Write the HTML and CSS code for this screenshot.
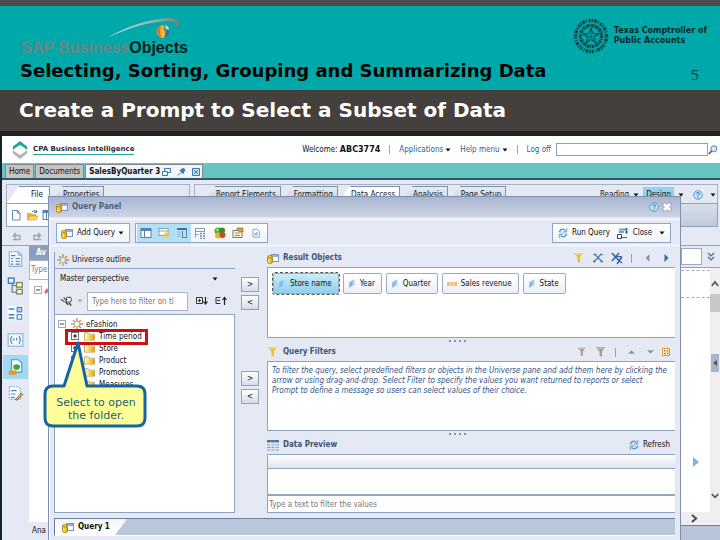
FILE: index.html
```html
<!DOCTYPE html>
<html lang="en">
<head>
<meta charset="utf-8">
<title>Create a Prompt to Select a Subset of Data</title>
<link rel="stylesheet" href="styles.css">
</head>
<body>
<svg class="defs" aria-hidden="true">
  <defs>
    <linearGradient id="gold" x1="0" x2="1"><stop offset="0" stop-color="#fff07a"/><stop offset="1" stop-color="#e0a010"/></linearGradient>
    <linearGradient id="arc" x1="0" x2="1"><stop offset="0" stop-color="#b9dcdc"/><stop offset=".6" stop-color="#9fb5b5"/><stop offset="1" stop-color="#6a7f80"/></linearGradient>
    <symbol id="query" viewBox="0 0 12 12"><rect x="4.5" y="2.5" width="7" height="7" fill="#f4f9ff" stroke="#7593bd"/><path d="M5 3h6v2H5z" fill="#8fb2de"/><rect x=".5" y="3.5" width="5" height="8" rx="2" fill="url(#gold)" stroke="#b8860b"/><path d="M1 5.5q2 1.200 4 0" stroke="#b8860b" fill="none"/></symbol>
    <symbol id="universe" viewBox="0 0 12 12"><g stroke-width="1.500" fill="none"><path d="M6 0v4M10 2L7.500 4.500" stroke="#c99a2e"/><path d="M12 6H8M10 10L7.500 7.500" stroke="#8c8ca8"/><path d="M6 12V8M2 10l2.500-2.500" stroke="#d6a850"/><path d="M0 6h4M2 2l2.500 2.500" stroke="#9a9ab0"/></g></symbol>
    <symbol id="folder" viewBox="0 0 12 10"><path d="M.5 9.500v-8h4l1 1.500h6v6.500z" fill="#fff3b0" stroke="#b9a36a"/><path d="M3 4h8.500v5.500H3z" fill="url(#gold)"/></symbol>
    <symbol id="plus" viewBox="0 0 8 8"><rect x=".5" y=".5" width="7" height="7" fill="#fff" stroke="#6d7480"/><path d="M2 4h4M4 2v4" stroke="#111"/></symbol>
    <symbol id="minus" viewBox="0 0 8 8"><rect x=".5" y=".5" width="7" height="7" fill="#fff" stroke="#a5abb5"/><path d="M2 4h4" stroke="#444"/></symbol>
    <symbol id="caret" viewBox="0 0 6 4"><path d="M.5 .5h5L3 3.500z" fill="currentColor"/></symbol>
    <symbol id="help" viewBox="0 0 10 10"><circle cx="5" cy="5" r="4.300" fill="#c9e5fa" stroke="#5a9bd0"/><path d="M3.500 3.800Q3.700 2.300 5.200 2.400q1.700.3 1.200 1.700L5 5.600v.9M5 7.200v1" fill="none" stroke="#2d76b8"/></symbol>
    <symbol id="refresh" viewBox="0 0 12 12"><path d="M1.500 5Q3 1 7 1.500l2 1.500M10.500 7Q9 11 5 10.500l-2-1.500" fill="none" stroke="#4a94cc" stroke-width="1.500"/><path d="M10.500 0v4.500H6M1.500 12V7.500H6" fill="none" stroke="#4a94cc"/><path d="M2.500 6h7" stroke="#8ec2e6"/></symbol>
    <symbol id="funnel" viewBox="0 0 12 12"><path d="M1 1h9L7 5.500V11L4.500 9.500v-4z" fill="currentColor"/><path d="M2.500 2h6" stroke="#fff" opacity=".6"/></symbol>
    <symbol id="dim" viewBox="0 0 10 12"><path d="M1.500 4L6 1v7L1.500 11z" fill="#86b7e4"/><path d="M6 1l2-.5v7L6 8z" fill="#a9cdee"/></symbol>
    <symbol id="measure" viewBox="0 0 11 6"><path d="M0 1h3v4H0zM4 1h3v4H4zM8 1h3v4H8z" fill="#f0a34a"/><path d="M0 3h11" stroke="#fbd9ae"/></symbol>
    <symbol id="page" viewBox="0 0 12 12"><path d="M2.500 1.500h5l2.500 2.500v7H2.500z" fill="#fff" stroke="#5b8dbb"/><path d="M7.500 1.500V4H10" fill="none" stroke="#5b8dbb"/></symbol>
    <symbol id="pagebars" viewBox="0 0 12 12"><path d="M2.500 1.500h5l2.500 2.500v7H2.500z" fill="#fff" stroke="#5b9bd0"/><path d="M5 9V6M7 9V4.500" stroke="#3a78b0"/></symbol>
    <symbol id="open" viewBox="0 0 12 12"><path d="M1 11V4h4l1 1h4v6z" fill="#e8b43a"/><path d="M1 11l3-4h8l-2 4z" fill="#ffd968" stroke="#b88a20" stroke-width=".6"/><path d="M6 3q2-3 4 0M10.500 1v2.500H8" fill="none" stroke="#3f79b0"/></symbol>
    <symbol id="grid" viewBox="0 0 12 12"><rect x="1" y="1.500" width="10" height="9" fill="#fff" stroke="#4f84b5"/><path d="M1 3h10" stroke="#4f84b5" stroke-width="2"/><path d="M4.500 3v8" stroke="#4f84b5"/></symbol>
    <symbol id="gridstar" viewBox="0 0 12 12"><rect x="1" y="1.500" width="9" height="7" fill="#fff" stroke="#8aa3bd"/><path d="M1 4h9" stroke="#8aa3bd"/><path d="M8 4l1 2.500L12 7 9.500 8.500 9 12 7.500 9 5 8l2-1.500z" fill="#f3c52e"/></symbol>
    <symbol id="columns" viewBox="0 0 12 12"><path d="M1 2h10" stroke="#3f6f9f" stroke-width="2"/><path d="M1.500 5h3M1.500 7h3M1.500 9h3" stroke="#8db4d6"/><path d="M6.500 4v7M10.500 2v9M6.500 10.500h4" stroke="#4f84b5" fill="none"/></symbol>
    <symbol id="rows" viewBox="0 0 12 12"><path d="M1.500 10.500v-9h9v3h-9M1.500 7.500h3" fill="none" stroke="#7c9cbb"/><path d="M6 6.500h2M9 6.500h2M6 9h2M9 9h2M6 11.500h2M9 11.500h2" stroke="#6b8fb5" stroke-width="1.500"/></symbol>
    <symbol id="table" viewBox="0 0 12 12"><path d="M0 1h12v2.500H0z" fill="#4d79a8"/><path d="M0 6h12M0 8.500h12M0 11h12" stroke="#7fa5ca"/><path d="M4 3v9M8 3v9" stroke="#e4eaf4"/></symbol>
    <symbol id="people" viewBox="0 0 12 12"><circle cx="4" cy="4" r="3.500" fill="#4fae3a"/><circle cx="8" cy="3.500" r="3" fill="#2f8f2c"/><circle cx="4" cy="8.500" r="3" fill="#e9b92c"/><circle cx="8.500" cy="8" r="3" fill="#c94b25"/><circle cx="3.500" cy="3" r="1.200" fill="#b9e6a5"/></symbol>
    <symbol id="props" viewBox="0 0 12 12"><rect x="1" y="3.500" width="9" height="7" fill="#fff6dc" stroke="#8c7b55"/><path d="M5 1h6v4H8L5 3z" fill="#dba044" stroke="#805a1c" stroke-width=".6"/><path d="M3 6h5M3 8.500h5" stroke="#7b8fb0"/></symbol>
    <symbol id="report" viewBox="0 0 14 16"><path d="M1.500 1.500h8l3 3v10h-11z" fill="#f4faff" stroke="#86b2d8"/><path d="M9.500 1.500v3h3" fill="none" stroke="#86b2d8"/><path d="M3 5h4M3 7.500h2M7 7.500h4M3 10h2M7 10h4M3 12.500h2M7 12.500h4" stroke="#4682b4"/></symbol>
    <symbol id="tree" viewBox="0 0 14 16"><path d="M4 5v8.500h5M4 7.500h5" fill="none" stroke="#56779a"/><rect x=".7" y="1" width="5" height="4.500" fill="#fff" stroke="#3e7db6" stroke-width="1.300"/><rect x="8" y="5" width="5" height="4" fill="#fff" stroke="#888c5b" stroke-width="1.300"/><rect x="8" y="11" width="5" height="4" fill="#fff" stroke="#888c5b" stroke-width="1.300"/></symbol>
    <symbol id="controls" viewBox="0 0 14 16"><path d="M0 1.500h14v13H0z" fill="#f4faff"/><path d="M1 4.500h5M1 9.500h5M1 12.500h5" stroke="#4682b4" stroke-width="1.300"/><rect x="8.500" y="3" width="4" height="4" fill="#acd0ec" stroke="#4682b4"/><rect x="8.500" y="9.500" width="4" height="4" fill="#fff" stroke="#4682b4"/></symbol>
    <symbol id="edit" viewBox="0 0 14 16"><path d="M1.500 1.500h8l2 2v9h-10z" fill="#fff" stroke="#86b2d8" stroke-dasharray="2 1"/><path d="M3 5h5M3 8h4M3 11h3" stroke="#4682b4"/><path d="M7 13l5-6 1.500 1.500-5 5z" fill="#e6b54b" stroke="#463c2a" stroke-width=".6"/></symbol>
    <symbol id="cross" viewBox="0 0 10 10"><path d="M.5 1.500h2Q5 6 9.500 8.500h-2M9.500 1.500h-2Q5 6 .5 8.500h2" fill="none" stroke="#3c74ae" stroke-width="1.300"/></symbol>
  </defs>
</svg>

<header class="slide-head">
  <div class="brand-row">
    <div class="sap">
      <svg class="sap-arc" viewBox="0 0 76 22" aria-hidden="true">
        <path d="M0 20Q30 2 62 0q12 0 10 9l-3-1q1-4-8-5Q34 4 0 20z" fill="url(#arc)"/>
        <circle cx="56" cy="13.500" r="6.500" fill="#f0b429"/><path d="M56 7a6.500 6.500 0 0 1 0 13z" fill="#2b6fae"/><path d="M55 7.200q-4 6 0 12.600l-3-1q-4-6 0-11z" fill="#e0702e"/><path d="M54 8q3 5 0 11l3 1q3-6 0-12z" fill="#f6c324"/><path d="M57 8q4 3 1 7l-2 4q3-5 0-8z" fill="#5cab4a"/><path d="M58 7q4 1 4 5l-3-1z" fill="#b9dff2"/>
      </svg>
      <span class="sap-gray">SAP Business</span><span class="sap-dark">Objects</span>
    </div>
    <div class="agency">
      <svg class="seal" viewBox="0 0 36 36" fill="none" stroke="#0d4447" aria-hidden="true">
        <circle cx="18" cy="18" r="15.500" stroke-width="3.500" stroke-dasharray="1.500 1 3 1.200 1 1.500 2 1"/>
        <circle cx="18" cy="18" r="10.500" stroke-width="3.500" stroke-dasharray="2 .7 1 .8"/>
        <path d="M18 10l2 5.600 6 .1-4.700 3.600 1.700 5.700-5-3.400-5 3.400 1.700-5.700L10 15.700l6-.1z" fill="#00a9a9" stroke-width="1"/>
        <path d="M18 10v9l5 6M18 19l8-3.300M18 19l-8-3.300M18 19l-5 6" stroke-width=".7"/>
      </svg>
      <p>Texas Comptroller of<br>Public Accounts</p>
    </div>
  </div>
  <div class="course-row"><p>Selecting, Sorting, Grouping and Summarizing Data</p><span class="num">5</span></div>
</header>
<h1>Create a Prompt to Select a Subset of Data</h1>

<main class="app">
  <div class="app-head">
    <svg class="cpa-logo" viewBox="0 0 18 20" aria-hidden="true"><path d="M1 10V6l8-6 8 6v4l-4-3-4-2.500L5 7z" fill="#23a5a3"/><path d="M1 10l4 3 4 2.500 4-2.500 4-3v4l-8 6-8-6z" fill="#b3b7bb"/></svg>
    <strong class="cpa">CPA Business Intelligence</strong>
    <div class="user-menu">
      <span>Welcome: <b>ABC3774</b></span><i class="bar"></i>
      <a href="#">Applications <svg class="caret"><use href="#caret"/></svg></a>
      <a href="#">Help menu <svg class="caret"><use href="#caret"/></svg></a><i class="bar"></i>
      <a href="#">Log off</a>
    </div>
    <input class="search" type="search" aria-label="Search">
    <svg class="lens" viewBox="0 0 12 12" aria-hidden="true"><circle cx="7" cy="4.500" r="3.500" fill="#d9ecfb" stroke="#5b9bd0" stroke-width="1.300"/><path d="M4.500 7L1 11" stroke="#a4563a" stroke-width="2"/></svg>
  </div>

  <nav class="doc-tabs">
    <a href="#">Home</a><a href="#">Documents</a>
    <a href="#" class="on">SalesByQuarter 3
      <svg viewBox="0 0 40 10" class="tab-tools" aria-hidden="true"><g fill="none" stroke="#3a78b0"><path d="M3.500 4V1.500h6v4H7"/><path d="M1.500 4.500h5v4h-5z"/><path d="M17 8.500l3-3m-1-2l3 3 2-4-2-1z" fill="#3a78b0"/><path d="M31.500 1.500h7v7h-7zM33 3l4 4M37 3l-4 4" fill="#cfe3f4"/></g></svg></a>
  </nav>

  <div class="ribbon">
    <div class="tab-set first">
      <button class="slant on">File</button><button class="slant">Properties</button>
    </div>
    <div class="tab-set second">
      <button class="slant">Report Elements</button><button class="slant">Formatting</button><button class="slant on">Data Access</button><button class="slant">Analysis</button><button class="slant">Page Setup</button>
      <div class="modes"><span>Reading</span><svg class="caret"><use href="#caret"/></svg><span class="design">Design</span><svg class="caret"><use href="#caret"/></svg><svg class="ic10 help"><use href="#help"/></svg><svg class="caret"><use href="#caret"/></svg></div>
    </div>
  </div>
  <div class="tool-row"><div class="file-tools"><svg class="ic12"><use href="#page"/></svg><svg class="ic12"><use href="#open"/></svg><svg class="ic12"><use href="#grid"/></svg></div><div class="tool-right"></div></div>
  <div class="undo-row">
    <svg viewBox="0 0 30 10" class="undo" aria-hidden="true"><path d="M1 7.500h7v-4H2M4 1L1.500 3.500 4 6M29 7.500h-7v-4h6M26 1l2.500 2.500L26 6" fill="none" stroke="#9aa3b0" stroke-width="1.300"/></svg>
  </div>

  <div class="workspace">
    <nav class="side" aria-label="Panels">
      <svg><use href="#report"/></svg><svg><use href="#tree"/></svg><svg><use href="#controls"/></svg>
      <svg viewBox="0 0 14 16"><rect x=".5" y="2.500" width="13" height="11" fill="#f4faff" stroke="#86b2d8"/><path d="M4 4.500Q1.500 8 4 11.500M10 4.500q2.500 3.500 0 7M5.500 6.500v2M8 6v2.500" fill="none" stroke="#4682b4"/></svg>
      <svg class="picked" viewBox="0 0 14 16"><path d="M3.500 1.500h6l3 3v8h-9z" fill="#fff" stroke="#4c94c6"/><path d="M1 11h7v4H1z" fill="#d89d3a"/><ellipse cx="8" cy="8" rx="3" ry="2.500" fill="#3aa64a"/></svg>
      <svg><use href="#edit"/></svg>
    </nav>
    <aside class="avail"><h2>Av</h2><div class="avail-type">Type</div><div class="avail-tree"><svg class="box"><use href="#minus"/></svg><svg class="ic8" viewBox="0 0 8 8"><path d="M0 6l3-4 2 3-3 3z" fill="#e06a72"/></svg></div><div class="avail-foot">Ana</div></aside>
    <section class="canvas">
      <div class="formula"><span class="fx"></span><svg viewBox="0 0 8 10" class="chev"><path d="M1 1l3 3 3-3M1 5l3 3 3-3" fill="none" stroke="#3b6e9c" stroke-width="1.200"/></svg></div>
      <div class="sheet">
        <div class="sheet-page"><i></i><svg viewBox="0 0 6 10" class="next"><path d="M0 0l6 5-6 5z" fill="#7db7e4"/></svg></div>
        <div class="scroll"><svg viewBox="0 0 10 8"><path d="M1 7l4-5 4 5" fill="none" stroke="#555" stroke-width="2"/></svg><i class="thumb"></i><i class="grab"><svg viewBox="0 0 4 6"><path d="M4 0v6L0 3z" fill="#555"/></svg></i><svg viewBox="0 0 10 8" class="down"><path d="M1 1l4 4 4-4" fill="none" stroke="#555" stroke-width="2"/></svg></div>
      </div>
      <div class="hscroll"><svg viewBox="0 0 8 10"><path d="M1 1l5 4-5 4" fill="none" stroke="#444" stroke-width="2"/></svg></div>
      <div class="status"></div>
    </section>
  </div>

  <section class="dialog" aria-label="Query Panel">
    <header class="dlg-title"><svg class="ic12"><use href="#query"/></svg><b>Query Panel</b><svg class="ic10 push"><use href="#help"/></svg><svg class="ic8" viewBox="0 0 8 8"><path d="M0 0h2.500L4 1.500 5.500 0H8v2.500L6.500 4 8 5.500V8H5.500L4 6.500 2.500 8H0V5.500L1.500 4 0 2.500z" fill="#fff" stroke="#63718c" stroke-width=".5"/></svg></header>
    <div class="dlg-tools">
      <div class="group add"><button><svg class="ic12"><use href="#query"/></svg>Add Query</button><svg class="caret"><use href="#caret"/></svg></div>
      <div class="group icons"><span class="hot"><svg class="ic12"><use href="#grid"/></svg></span><span class="hot"><svg class="ic12"><use href="#gridstar"/></svg></span><span class="hot"><svg class="ic12"><use href="#columns"/></svg></span><span><svg class="ic12"><use href="#rows"/></svg></span><span class="apart"><svg class="ic12"><use href="#people"/></svg></span><span><svg class="ic12"><use href="#props"/></svg></span><span><svg class="ic10"><use href="#pagebars"/></svg></span></div>
      <div class="group run"><button><svg class="ic10"><use href="#refresh"/></svg>Run Query</button><button><svg class="ic12" viewBox="0 0 12 12"><path d="M2 2.500h7M2 5h5M8 5h3" stroke="#6e9fc6" stroke-width="2"/><path d="M.5 7.500h4v4h-4z" fill="#fff" stroke="#345"/><path d="M9.500 7V1M8 2.500L9.500 1 11 2.500M5 10.500h5" fill="none" stroke="#2d6ea6"/></svg>Close</button><svg class="caret"><use href="#caret"/></svg></div>
    </div>
    <div class="dlg-main">
      <div class="outline">
        <div class="out-head"><svg class="ic12"><use href="#universe"/></svg>Universe outline</div>
        <div class="persp">Master perspective<svg class="caret"><use href="#caret"/></svg></div>
        <div class="filter">
          <svg class="bino" viewBox="0 0 14 12" aria-hidden="true"><path d="M1 4l4 3M4 2l3 4" stroke="#555" stroke-width="1.300"/><rect x="7" y="2" width="5" height="5" rx="1" fill="#fff" stroke="#333"/><path d="M6 7l3 3M10 8l2 3" stroke="#333" stroke-width="1.500"/></svg>
          <svg class="caret pale"><use href="#caret"/></svg>
          <input type="text" placeholder="Type here to filter on tl" aria-label="Filter the outline">
          <svg class="exp" viewBox="0 0 12 10"><path d="M.5 1.500h6v6h-6zM2 4.500h3M3.500 3v3" fill="none" stroke="#333"/><path d="M9.500 1v7M7.500 5.500l2 2.500 2-2.500" fill="none" stroke="#222" stroke-width="1.200"/></svg>
          <svg class="exp" viewBox="0 0 12 10"><path d="M5.500 1.500H1v6h4.500M2 4.500h3" fill="none" stroke="#333"/><path d="M9.500 9V2M7.500 4l2-2.500 2 2.500" fill="none" stroke="#222" stroke-width="1.200"/></svg>
        </div>
        <ul class="nodes">
          <li><svg class="box"><use href="#minus"/></svg><svg class="ic12"><use href="#universe"/></svg>eFashion
            <ul>
              <li class="target"><svg class="box"><use href="#plus"/></svg><svg class="fold"><use href="#folder"/></svg>Time period</li>
              <li><svg class="box"><use href="#plus"/></svg><svg class="fold"><use href="#folder"/></svg>Store</li>
              <li><svg class="box"><use href="#plus"/></svg><svg class="fold"><use href="#folder"/></svg>Product</li>
              <li><svg class="box"><use href="#plus"/></svg><svg class="fold"><use href="#folder"/></svg>Promotions</li>
              <li><svg class="box"><use href="#plus"/></svg><svg class="fold"><use href="#folder"/></svg>Measures</li>
            </ul></li>
        </ul>
      </div>
      <div class="movers">
        <div><button>&gt;</button><button>&lt;</button></div>
        <div><button>&gt;</button><button>&lt;</button></div>
      </div>
      <div class="panes">
        <div class="pane-head"><svg class="ic12"><use href="#query"/></svg><b>Result Objects</b>
          <span class="pane-icons"><svg class="ic12 yellow"><use href="#funnel"/></svg><svg class="ic10"><use href="#cross"/></svg><svg class="ic12" viewBox="0 0 12 12"><path d="M1 1q4 5 8 8M8 1L1 9M6 7l5 4M11 5l-5 7M5 4l6 1" fill="none" stroke="#2f659e" stroke-width="1.500"/></svg><i class="bar"></i><svg class="tri" viewBox="0 0 6 8"><path d="M5 0v8L1 4z" fill="#8f97a3"/></svg><svg class="tri" viewBox="0 0 6 8"><path d="M1 0v8l4-4z" fill="#2a6bb0"/></svg></span></div>
        <div class="pane results"><button class="obj sel"><svg class="dim"><use href="#dim"/></svg>Store name</button><button class="obj"><svg class="dim"><use href="#dim"/></svg>Year</button><button class="obj"><svg class="dim"><use href="#dim"/></svg>Quarter</button><button class="obj"><svg class="mea"><use href="#measure"/></svg>Sales revenue</button><button class="obj"><svg class="dim"><use href="#dim"/></svg>State</button></div>
        <div class="dots"><i></i><i></i><i></i><i></i></div>
        <div class="pane-head"><svg class="ic12 yellow"><use href="#funnel"/></svg><b>Query Filters</b>
          <span class="pane-icons"><svg class="ic10 tan"><use href="#funnel"/></svg><svg class="ic12 tan"><use href="#funnel"/></svg><i class="bar"></i><svg class="tri" viewBox="0 0 8 6"><path d="M0 5h8L4 1z" fill="#8f97a3"/></svg><svg class="tri" viewBox="0 0 8 6"><path d="M0 1h8L4 5z" fill="#8f97a3"/></svg><svg class="ic8" viewBox="0 0 8 8"><path d="M.5.5h7v7h-7z" fill="#fff6d8" stroke="#d69a2c"/><path d="M2 2h1.500v1.500H2zM4.800 2h1.500v1.500H4.800zM2 4.800h1.500v1.500H2zM4.800 4.800h1.500v1.500H4.800z" fill="#a8701a"/></svg></span></div>
        <div class="pane hint"><p>To filter the query, select predefined filters or objects in the Universe pane and add them here by clicking the<br>arrow or using drag-and-drop. Select Filter to specify the values you want returned to reports or select<br>Prompt to define a message so users can select values of their choice.</p></div>
        <div class="dots"><i></i><i></i><i></i><i></i></div>
        <div class="pane-head"><svg class="ic12"><use href="#table"/></svg><b>Data Preview</b><button class="refresh"><svg class="ic10"><use href="#refresh"/></svg>Refresh</button></div>
        <div class="preview"><div class="pv-head"></div><div class="pv-body"></div><input type="text" placeholder="Type a text to filter the values" aria-label="Filter the values"></div>
      </div>
    </div>
    <footer class="dlg-tabs"><button><svg class="ic12"><use href="#query"/></svg>Query 1</button></footer>
    <div class="callout">
      <svg viewBox="0 0 106 90" aria-hidden="true"><path d="M10 46h11L35 3l9 43h50q8 0 8 8v24q0 8-8 8H10q-8 0-8-8V54q0-8 8-8z" fill="#ffff99" stroke="#1565a5" stroke-width="3" stroke-linejoin="round"/></svg>
      <p>Select to open<br>the folder.</p>
    </div>
  </section>
</main>
</body>
</html>
```
FILE: styles.css
```css
* { box-sizing: border-box; }
html, body { height: 100%; }
body {
  margin: 0;
  display: flex;
  flex-direction: column;
  overflow: hidden;
  background: #fff;
  color: #111;
  font: 8px/12px "DejaVu Sans Condensed", "DejaVu Sans", sans-serif;
}
p, h1, h2, ul { margin: 0; padding: 0; }
li { list-style: none; }
svg { display: block; flex: none; overflow: visible; }
button, input { font: inherit; color: inherit; margin: 0; padding: 0; border: 0; background: none; border-radius: 0; }
a { color: #2a6494; text-decoration: none; }
button { display: flex; align-items: center; white-space: nowrap; }
.defs { position: absolute; width: 0; height: 0; }
.ic8 { width: 8px; height: 8px; }
.ic10 { width: 10px; height: 10px; }
.ic12 { width: 12px; height: 12px; }
.caret { width: 6px; height: 4px; color: #111; }
.box { width: 8px; height: 8px; }
.bar { width: 1px; height: 9px; background: #93a3ba; }
.yellow { color: #efc321; }
.tan { color: #a89a86; }

/* Slide heading */
.slide-head { background: #00a9a9; border-top: 6px solid #4d4d4d; height: 90px; flex: none; }
.brand-row { display: flex; justify-content: space-between; height: 52px; padding: 12px 13px 0 21px; }
.sap { display: block; font: bold 16px/18px "Liberation Sans", sans-serif; white-space: nowrap; }
.sap-arc { width: 76px; height: 22px; margin: 0 0 -1px 86px; }
.sap-gray { color: #6b8587; }
.sap-dark { color: #0b1d20; }
.agency { display: flex; gap: 5px; }
.agency p { font: bold 8px/10px "DejaVu Sans", sans-serif; padding-top: 8px; color: #06292b; }
.seal { width: 36px; height: 36px; }
.course-row { display: flex; justify-content: space-between; padding: 3px 21px 0 20px; font: bold 18px/20px "DejaVu Sans", sans-serif; color: #000; }
.num { font: 15px/26px "Noto Sans", sans-serif; color: #114d50; }
h1 { flex: none; height: 46px; padding: 9px 19px; background: #43403d; border-bottom: 5px solid #222; color: #fff; font: bold 20px/22px "DejaVu Sans", sans-serif; }

/* Application frame */
.app { position: relative; flex: 1; min-height: 0; display: flex; flex-direction: column; border-left: 2px solid #16222e; background: #e4e9f3; }
.app-head { display: flex; align-items: center; height: 27px; background: #fff; padding: 0 2px 0 10px; flex: none; }
.cpa-logo { width: 16px; height: 18px; }
.cpa { margin-left: 5px; font: bold 7px/10px "DejaVu Sans", sans-serif; color: #26323c; border-bottom: 1px solid #23a5a3; }
.user-menu { display: flex; align-items: center; gap: 9px; margin-left: auto; }
.user-menu b { font-family: "DejaVu Sans", sans-serif; }
.user-menu a { display: flex; align-items: center; gap: 2px; }
.search { width: 152px; height: 13px; border: 1px solid #8f9db3; margin-left: 5px; }
.lens { width: 10px; height: 10px; }
.doc-tabs { display: flex; flex: none; height: 17px; background: #66c5c0; border-bottom: 2px solid #31596d; padding: 1px 3px 0; gap: 1px; }
.doc-tabs a { display: flex; align-items: center; padding: 0 3px; background: #c6c3c0; color: #111; border: 1px solid #7f8a90; border-bottom: 0; }
.doc-tabs .on { background: #f2f4f8; font-weight: bold; gap: 1px; padding-right: 1px; }
.tab-tools { width: 40px; height: 10px; }
.ribbon { display: flex; gap: 4px; padding: 4px 2px 0 4px; height: 23px; flex: none; }
.tab-set { display: flex; align-items: flex-end; border: 1px solid #a5b1c6; border-bottom: 0; }
.first { width: 184px; }
.second { flex: 1; padding-left: 8px; }
.slant { position: relative; height: 17px; z-index: 0; border-right: 1px solid #7d90ac; padding: 0 4px 0 13px; }
.slant::before { content: ""; position: absolute; inset: 0; z-index: -1; background: linear-gradient(#e9edf5, #c5cfdf); clip-path: polygon(0 100%, 12px 0, 100% 0, 100% 100%); }
.slant::after { content: ""; position: absolute; left: 12px; right: 0; top: 0; border-top: 1px solid #7d90ac; }
.slant.on::before { background: #fff; }
.first .slant.on { padding: 0 6px 0 24px; }
.modes { display: flex; align-items: center; gap: 4px; margin-left: auto; height: 17px; padding-right: 1px; }
.design { background: #93d2ee; padding: 2px 3px; }
.help { margin: 0 3px 0 5px; }
.tool-row { display: flex; height: 24px; padding: 0 2px 0 4px; gap: 4px; flex: none; }
.file-tools { width: 184px; background: #fff; border: 1px solid #8fa2bf; display: flex; align-items: center; gap: 4px; padding-left: 3px; }
.tool-right { flex: 1; background: linear-gradient(#d8dfeb, #c0cada); border: 1px solid #8fa2bf; }
.undo-row { height: 18px; flex: none; padding: 5px 10px; }
.undo { width: 30px; height: 10px; }
.workspace { display: flex; flex: 1; min-height: 0; border-top: 1px solid #8fa2bf; }
.side { width: 27px; display: flex; flex-direction: column; align-items: center; gap: 3px; padding-top: 1px; }
.side svg { width: 25px; height: 24px; padding: 3px 0; }
.side .picked { background: #9fd9f3; }
.avail { width: 19px; background: #fff; display: flex; flex-direction: column; white-space: nowrap; margin-right: auto; }
.avail h2 { background: #8d9dba; color: #fff; font: bold 8px/14px "DejaVu Sans Condensed", sans-serif; padding-left: 7px; }
.avail-type { border: 1px solid #a9b4c8; border-width: 1px 0 1px 1px; padding: 2px 1px; color: #7a7a7a; line-height: 14px; }
.avail-tree { display: flex; gap: 2px; padding: 6px 0 6px 5px; }
.avail-foot { margin-top: auto; background: #e4e9f3; padding: 2px 3px; line-height: 14px; }
.canvas { width: 39px; display: flex; flex-direction: column; }
.formula { height: 22px; display: flex; align-items: center; justify-content: space-between; padding-right: 5px; border-bottom: 1px solid #8fa2bf; }
.fx { width: 21px; height: 17px; background: #fff; border: 1px solid #9dacc4; }
.chev { width: 8px; height: 10px; }
.sheet { flex: 1; display: flex; background: #fff; }
.sheet-page { flex: 1; display: flex; flex-direction: column; justify-content: space-between; padding: 2px 0 45px; }
.sheet-page i { height: 28px; border: 1px dashed #aaa; border-width: 1px 0; }
.next { width: 6px; height: 10px; margin-left: 12px; }
.scroll { width: 10px; background: #efefef; display: flex; flex-direction: column; align-items: center; padding: 12px 0; }
.scroll svg { width: 8px; height: 7px; }
.thumb { width: 10px; height: 18px; background: #c8c8c8; margin-top: 7px; }
.grab { width: 8px; height: 18px; background: #a7b5cd; margin-top: 42px; display: flex; align-items: center; justify-content: center; }
.scroll .grab svg { width: 4px; height: 6px; }
.scroll .down { margin-top: auto; }
.hscroll { height: 13px; background: #efefef; padding: 2px 0 0 10px; }
.hscroll svg { width: 7px; height: 9px; }
.status { height: 15px; background: #b9c5da; border-top: 1px solid #6d7f9e; }

/* Query Panel dialog, lying over the application */
.dialog { position: absolute; top: 60px; left: 46px; right: 39px; bottom: 0; display: flex; flex-direction: column; background: #e4e9f3; border: 1px solid #7f90ac; border-bottom: 0; box-shadow: inset 1px 1px #fff; }
.dlg-title { display: flex; align-items: center; gap: 4px; height: 20px; padding: 0 9px 0 7px; background: linear-gradient(#a9b5d0, #ccd4e5); color: #4a607f; }
.push { margin-left: auto; }
.dlg-tools { display: flex; align-items: center; gap: 5px; height: 27px; padding: 0 9px 0 7px; border-top: 1px solid #fff; border-bottom: 1px solid #fff; margin: 2px 0 3px; flex: none; }
.group { display: flex; align-items: center; height: 20px; border: 1px solid #8fa5c5; background: linear-gradient(#fff, #f0f3f9); }
.group button { gap: 4px; }
.add { width: 74px; padding: 0 5px 0 4px; justify-content: space-between; }
.icons { padding: 0 2px 0 1px; }
.icons span { width: 18px; height: 18px; display: flex; align-items: center; justify-content: center; }
.icons .hot { background: #b5dff2; }
.icons .apart { margin-left: 2px; }
.run { margin-left: auto; width: 119px; padding: 0 5px; justify-content: space-between; }
.dlg-main { display: flex; flex: 1; min-height: 0; padding: 0 5px; }
.outline { width: 181px; display: flex; flex-direction: column; border-left: 1px solid #8fa2bf; margin-top: 3px; }
.out-head { display: flex; align-items: center; gap: 3px; height: 17px; padding-left: 2px; border-bottom: 1px solid #8fa2bf; }
.persp { display: flex; align-items: center; justify-content: space-between; height: 19px; padding: 0 17px 0 5px; }
.filter { display: flex; align-items: center; gap: 4px; height: 26px; padding: 0 5px; }
.bino { width: 13px; height: 12px; }
.pale { color: #a5abb5; }
.filter input { flex: 1; min-width: 0; height: 19px; background: #fff; border: 1px solid #a9b4c8; padding: 0 4px; margin-right: 4px; }
.exp { width: 12px; height: 10px; margin-right: 3px; }
input::placeholder { color: #777; opacity: 1; }
.nodes { flex: 1; background: #fff; border: 1px solid #8fa2bf; border-left: 0; padding: 3px 3px; }
.nodes li { line-height: 12px; }
.nodes li > svg { display: inline-block; vertical-align: middle; margin-right: 5px; }
.nodes li > .ic12 { margin: 0 3px 0 0; }
.nodes ul { padding-left: 13px; }
.nodes .fold { width: 11px; height: 10px; margin-right: 4px; }
.target { outline: 3px solid #cc1016; outline-offset: -1px; width: 79px; margin-left: -4px; padding-left: 4px; white-space: nowrap; }
.movers { width: 32px; padding: 28px 7px 0 6px; }
.movers > div { display: flex; flex-direction: column; gap: 3px; margin-bottom: 61px; }
.movers button { width: 18px; height: 15px; justify-content: center; border: 1px solid #8fa2bf; background: linear-gradient(#fff, #d4dbe9); line-height: 10px; }
.panes { flex: 1; min-width: 0; display: flex; flex-direction: column; }
.pane-head { display: flex; align-items: center; gap: 4px; height: 18px; color: #3c5474; }
.pane-icons { display: flex; align-items: center; gap: 8px; margin-left: auto; padding-right: 5px; }
.tri { width: 7px; height: 8px; margin-left: 4px; }
.pane { height: 71px; background: #fff; border: 1px solid #8fa2bf; border-right: 0; }
.results { display: flex; align-items: flex-start; gap: 4px; padding: 5px; }
.obj { height: 21px; padding: 0 6px 0 4px; gap: 4px; border: 1px solid #9aaac6; border-radius: 2px; background: linear-gradient(#fff, #eceff6); }
.sel { background: linear-gradient(#c9ecf9, #8fd0ec); outline: 1px dashed #555; }
.dim { width: 8px; height: 10px; }
.mea { width: 10px; height: 6px; }
.dots { display: flex; gap: 3px; height: 5px; align-items: center; justify-content: center; padding-right: 27px; }
.dots i { width: 2px; height: 2px; background: #8794ab; }
.hint { height: 70px; padding: 4px; color: #2f5587; font-style: italic; line-height: 10px; white-space: nowrap; }
.refresh { margin-left: auto; gap: 4px; padding-right: 5px; color: #111; }
.preview { border: 1px solid #8fa2bf; border-right: 0; display: flex; flex-direction: column; flex: 1; background: #fff; }
.pv-head { height: 14px; background: linear-gradient(#fff, #dfe4ee); border-bottom: 1px solid #8fa2bf; }
.pv-body { flex: 1; }
.preview input { height: 18px; border-top: 2px solid #93a5bf; width: 100%; padding: 0 1px; }
.dlg-tabs { height: 18px; margin: 5px 5px 4px; flex: none; background: #bac6da; border-top: 1px solid #6d7f9e; border-left: 1px solid #6d7f9e; border-bottom: 1px solid #fff; }
.dlg-tabs button { width: 72px; height: 16px; padding-left: 7px; gap: 4px; background: linear-gradient(#f4f6fa, #fff); clip-path: polygon(0 0, 100% 0, 60px 100%, 0 100%); font-weight: bold; }

/* Yellow note that points at the Time period folder */
.callout { position: absolute; left: -6px; top: 143px; width: 106px; height: 90px; display: flex; flex-direction: column; justify-content: flex-end; }
.callout svg { position: absolute; inset: 0; }
.callout p { position: relative; padding-bottom: 8px; text-align: center; color: #1b5f73; font: 11px/13px "DejaVu Sans", sans-serif; white-space: nowrap; }
```
